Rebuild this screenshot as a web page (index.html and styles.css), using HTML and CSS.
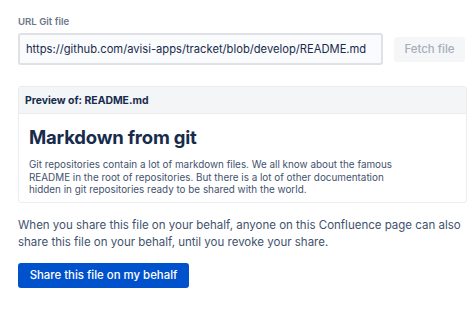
FILE: index.html
```html
<!DOCTYPE html>
<html lang="en">
<head>
    <meta charset="UTF-8">
    <title>Share Git file</title>
    <link rel="stylesheet" href="styles.css">
</head>
<body>
    <div class="share-form">
        <label class="field-label" for="gitUrl">URL Git file</label>
        <div class="url-row">
            <input type="text" id="gitUrl" class="url-input" value="https://github.com/avisi-apps/tracket/blob/develop/README.md">
            <button type="button" class="fetch-btn" disabled>Fetch file</button>
        </div>

        <div class="preview">
            <div class="preview-header">Preview of: README.md</div>
            <div class="preview-body">
                <h1>Markdown from git</h1>
                <p>Git repositories contain a lot of markdown files. We all know about the famous README in the root of repositories. But there is a lot of other documentation hidden in git repositories ready to be shared with the world.</p>
            </div>
        </div>

        <p class="notice">When you share this file on your behalf, anyone on this Confluence page can also share this file on your behalf, until you revoke your share.</p>

        <button type="button" class="share-btn">Share this file on my behalf</button>
    </div>
</body>
</html>
```

FILE: styles.css
```css
body {
    font-family: Inter, "Noto Sans", sans-serif;
    margin: 0;
    color: #172b4d;
    background-color: #fff;
}

.share-form {
    padding: 16px 9px 0 18px;
}

.field-label {
    display: block;
    font-size: 9.6px;
    font-weight: 600;
    color: #6b778c;
    margin-bottom: 6px;
}

.url-row {
    display: flex;
    align-items: center;
    gap: 11px;
}

.url-input {
    width: 365px;
    height: 32px;
    box-sizing: border-box;
    padding: 0 6px;
    border: 2px solid #dfe1e6;
    border-radius: 3px;
    background: #fafbfc;
    font-family: inherit;
    font-size: 11.2px;
    color: #172b4d;
}

.fetch-btn {
    width: 71px;
    height: 25px;
    border: none;
    border-radius: 3px;
    background: rgba(9, 30, 66, 0.04);
    color: #a5adba;
    font-family: inherit;
    font-size: 11.4px;
    font-weight: 500;
}

.preview {
    margin-top: 21px;
    width: 447px;
    border: 1px solid #ebecf0;
    border-radius: 3px;
}

.preview-header {
    height: 26px;
    display: flex;
    align-items: center;
    padding: 0 6px;
    background: #f4f5f7;
    border-bottom: 1px solid #ebecf0;
    font-size: 10.4px;
    font-weight: 700;
}

.preview-body {
    padding: 12px 10px 6px;
}

.preview-body h1 {
    margin: 0 0 10px;
    font-size: 18.5px;
    font-weight: 700;
    letter-spacing: -0.2px;
}

.preview-body p {
    margin: 0;
    max-width: 368px;
    font-size: 9.9px;
    line-height: 12.5px;
    color: #42526e;
}

.notice {
    margin: 14px 0 12px;
    font-size: 11.5px;
    line-height: 17px;
    color: #42526e;
}

.share-btn {
    width: 171px;
    height: 25px;
    border: none;
    border-radius: 3px;
    background: #0052cc;
    color: #fff;
    font-family: inherit;
    font-size: 11.4px;
    font-weight: 500;
}
```
